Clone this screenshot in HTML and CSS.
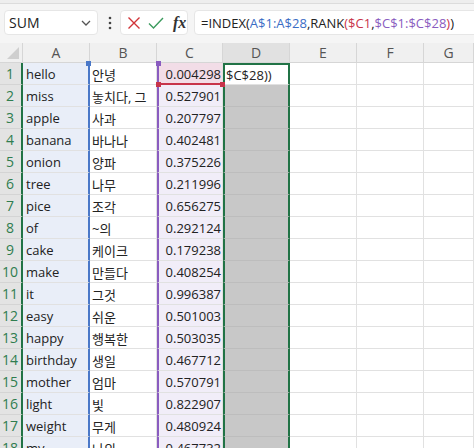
FILE: index.html
```html
<!DOCTYPE html>
<html lang="ko">
<head>
    <meta charset="UTF-8">
    <meta name="viewport" content="width=device-width, initial-scale=1.0">
    <title>Sheet1</title>
    <link rel="stylesheet" href="styles.css">
</head>
<body>
<div class="ribbon-edge"></div>
<div class="formula-bar">
    <div class="name-box">
        <span>SUM</span>
        <svg width="12" height="8" viewBox="0 0 12 8"><path d="M2 2 L6 6 L10 2" fill="none" stroke="#555" stroke-width="1.3"/></svg>
    </div>
    <div class="grip">
        <svg width="4" height="14" viewBox="0 0 4 14"><circle cx="2" cy="2" r="1.3" fill="#444"/><circle cx="2" cy="7" r="1.3" fill="#444"/><circle cx="2" cy="12" r="1.3" fill="#444"/></svg>
    </div>
    <div class="fx-box">
        <svg class="ico" width="14" height="14" viewBox="0 0 14 14"><path d="M1.5 1.5 L12.5 12.5 M12.5 1.5 L1.5 12.5" stroke="#d13438" stroke-width="1.4" fill="none"/></svg>
        <svg class="ico" width="16" height="14" viewBox="0 0 16 14"><path d="M1 7.5 L5.5 12 L15 2" stroke="#3c9b5e" stroke-width="1.4" fill="none"/></svg>
        <span class="fx">fx</span>
    </div>
    <div class="formula-input">=INDEX(<span class="ref-blue">A$1:A$28</span>,RANK<span class="ref-red">($C1</span>,<span class="ref-purple">$C$1:$C$28</span><span class="ref-red">)</span>)</div>
</div>

<div class="sheet" id="sheet">
    <div class="corner"><span class="tri"></span></div>
    <div class="col-head">A</div>
    <div class="col-head">B</div>
    <div class="col-head">C</div>
    <div class="col-head sel">D</div>
    <div class="col-head">E</div>
    <div class="col-head">F</div>
    <div class="col-head">G</div>
</div>

<script>
    const rows = [
        ['hello', '안녕', '0.004298'],
        ['miss', '놓치다, 그', '0.527901'],
        ['apple', '사과', '0.207797'],
        ['banana', '바나나', '0.402481'],
        ['onion', '양파', '0.375226'],
        ['tree', '나무', '0.211996'],
        ['pice', '조각', '0.656275'],
        ['of', '~의', '0.292124'],
        ['cake', '케이크', '0.179238'],
        ['make', '만들다', '0.408254'],
        ['it', '그것', '0.996387'],
        ['easy', '쉬운', '0.501003'],
        ['happy', '행복한', '0.503035'],
        ['birthday', '생일', '0.467712'],
        ['mother', '엄마', '0.570791'],
        ['light', '빛', '0.822907'],
        ['weight', '무게', '0.480924'],
        ['my', '나의', '0.467732']
    ];

    const sheet = document.getElementById('sheet');

    function cell(cls, text) {
        const div = document.createElement('div');
        div.className = cls;
        if (text) div.textContent = text;
        sheet.appendChild(div);
        return div;
    }

    rows.forEach(function(r, i) {
        cell('row-head', String(i + 1));
        const a = cell('cell col-a', r[0]);
        cell('cell col-b', r[1]);
        const c = cell('cell col-c' + (i === 0 ? ' active-ref' : ''), r[2]);
        cell('cell col-d' + (i === 0 ? ' editing' : ''), i === 0 ? '$C$28))' : '');
        cell('cell');
        cell('cell');
        cell('cell');
        if (i === 0) {
            // range handles
            c.insertAdjacentHTML('beforeend', '<i class="handle h-red-l"></i><i class="handle h-red-r"></i><i class="handle h-purple"></i>');
            a.insertAdjacentHTML('beforeend', '<i class="handle h-blue"></i>');
        }
    });
</script>
</body>
</html>
```

FILE: styles.css
```css
body {
    margin: 0;
    background: #f5f5f5;
    font-family: "Open Sans", "Noto Sans CJK KR", sans-serif;
    overflow: hidden;
}
.ribbon-edge {
    height: 3px;
    background: #eeeeee;
    border-bottom: 1px solid #dcdcdc;
}
.formula-bar {
    display: flex;
    align-items: center;
    padding: 6px 0 8px 4px;
    height: 25px;
}
.name-box, .fx-box, .formula-input {
    height: 25px;
    box-sizing: border-box;
    background: #fff;
    border: 1px solid #e6e6e6;
    border-radius: 4px;
    display: flex;
    align-items: center;
}
.name-box {
    width: 94px;
    padding: 0 5px 0 4px;
    justify-content: space-between;
    font-size: 14px;
    color: #222;
}
.grip {
    width: 21px;
    display: flex;
    justify-content: center;
    margin-left: 1px;
}
.fx-box {
    width: 68px;
    padding-left: 6px;
    gap: 7px;
}
.fx {
    font-family: "Liberation Serif", serif;
    font-style: italic;
    font-weight: bold;
    font-size: 16px;
    color: #333;
    margin-left: 2px;
}
.formula-input {
    flex: 1;
    margin-left: 6px;
    margin-right: -20px;
    padding-left: 6px;
    font-size: 13px;
    color: #222;
    white-space: nowrap;
}
.ref-blue { color: #3a6dc5; }
.ref-red { color: #c8344a; }
.ref-purple { color: #8a5cc0; }

.sheet {
    display: grid;
    grid-template-columns: 23px 67px 67px 66px 67px 67px 67px 1fr;
    grid-auto-rows: 22px;
    grid-template-rows: 20px;
    background: #fff;
}
.corner {
    background: #f0f0f0;
    border-right: 1px solid #d6d6d6;
    border-bottom: 1px solid #d6d6d6;
    position: relative;
}
.tri {
    position: absolute;
    right: 3px;
    bottom: 3px;
    width: 0;
    height: 0;
    border-left: 12px solid transparent;
    border-bottom: 12px solid #cfcfcf;
}
.col-head {
    background: #f0f0f0;
    border-right: 1px solid #d6d6d6;
    border-bottom: 1px solid #d6d6d6;
    color: #555;
    font-size: 14px;
    display: flex;
    align-items: center;
    justify-content: center;
}
.col-head.sel {
    background: #e1e1e1;
}
.row-head {
    background: #e3e3e3;
    border-right: 2px solid #217346;
    border-bottom: 1px solid #d4d4d4;
    color: #2f7d4f;
    font-size: 14px;
    display: flex;
    align-items: center;
    justify-content: center;
    padding-right: 1px;
}
.cell {
    box-sizing: border-box;
    border-right: 1px solid #e1e1e1;
    border-bottom: 1px solid #e1e1e1;
    font-size: 13px;
    color: #222;
    padding: 1px 3px 0;
    display: flex;
    align-items: center;
    white-space: nowrap;
    overflow: hidden;
    position: relative;
}
.col-a {
    background: #e9eef8;
    border-right: 2px solid #4a78c8;
    overflow: visible;
}
.col-b {
    padding-left: 2px;
}
.col-c {
    background: #f1edf8;
    border-left: 2px solid #8a5cc0;
    justify-content: flex-end;
    padding-right: 1px;
    overflow: visible;
}
.col-c.active-ref {
    background: #f2dde7;
    border-bottom: 2px solid #c8344a;
}
.col-d {
    background: #c8c8c8;
    border-left: 2px solid #217346;
    border-right: 2px solid #217346;
    border-bottom-color: #bdbdbd;
}
.col-d.editing {
    background: #fff;
    border-top: 2px solid #217346;
    border-bottom-color: #e1e1e1;
    padding-left: 1px;
}
.handle {
    position: absolute;
    width: 5px;
    height: 5px;
    z-index: 2;
}
.h-red-l { left: -3px; bottom: -4px; background: #c8344a; }
.h-red-r { right: -3px; bottom: -4px; background: #c8344a; }
.h-purple { left: -3px; top: -2px; background: #8a5cc0; }
.h-blue { right: -3px; top: -2px; background: #4a78c8; }
```
